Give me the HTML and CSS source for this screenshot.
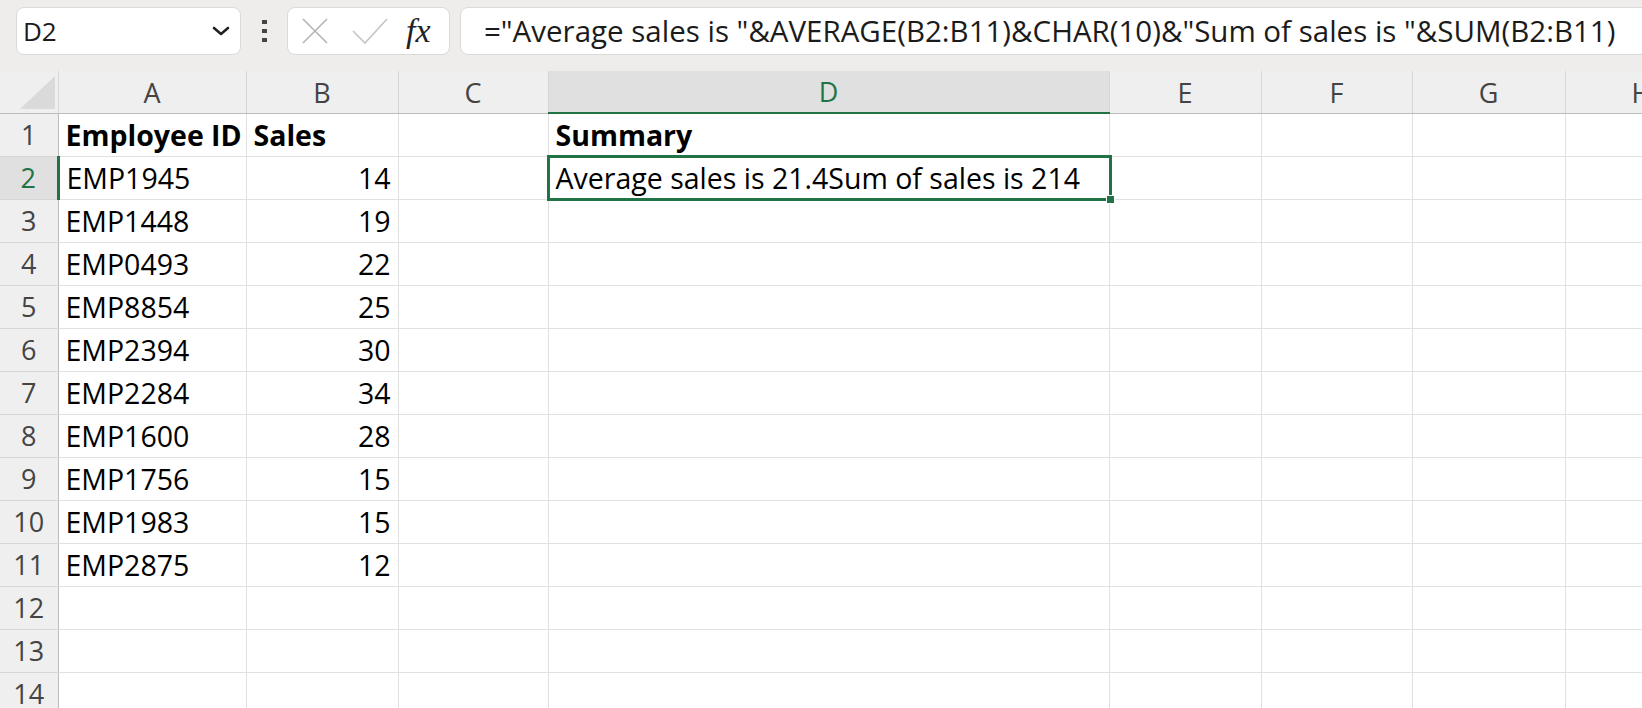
FILE: index.html
```html
<!DOCTYPE html>
<html>
<head>
    <title>Book1 - Excel</title>
    <link rel="stylesheet" href="styles.css">
</head>
<body>
    <div class="formula-bar">
        <div class="name-box">
            <span class="name-text">D2</span>
            <svg class="chevron" viewBox="0 0 18 10" xmlns="http://www.w3.org/2000/svg">
                <path d="M2 2 L9 8 L16 2"/>
            </svg>
        </div>
        <div class="dots"><span></span><span></span><span></span></div>
        <div class="fx-box">
            <svg class="cancel-icon" viewBox="0 0 26 26" xmlns="http://www.w3.org/2000/svg">
                <path d="M1 1 L25 25 M25 1 L1 25"/>
            </svg>
            <svg class="enter-icon" viewBox="0 0 36 26" xmlns="http://www.w3.org/2000/svg">
                <path d="M1 13 L13 25 L35 1"/>
            </svg>
            <span class="fx-label">fx</span>
        </div>
        <div class="formula-input">="Average sales is "&amp;AVERAGE(B2:B11)&amp;CHAR(10)&amp;"Sum of sales is "&amp;SUM(B2:B11)</div>
    </div>

    <table class="sheet">
        <colgroup>
            <col class="col-head">
            <col class="col-a">
            <col class="col-b">
            <col class="col-c">
            <col class="col-d">
            <col class="col-e">
            <col class="col-f">
            <col class="col-g">
            <col class="col-h">
        </colgroup>
        <thead>
            <tr>
                <th class="corner"></th>
                <th>A</th>
                <th>B</th>
                <th>C</th>
                <th class="active">D</th>
                <th>E</th>
                <th>F</th>
                <th>G</th>
                <th>H</th>
            </tr>
        </thead>
        <tbody>
            <tr>
                <th>1</th>
                <td class="bold">Employee ID</td>
                <td class="bold">Sales</td>
                <td></td>
                <td class="bold">Summary</td>
                <td></td><td></td><td></td><td></td>
            </tr>
            <tr>
                <th class="active">2</th>
                <td>EMP1945</td>
                <td class="num">14</td>
                <td></td>
                <td class="selected">Average sales is 21.4Sum of sales is 214<div class="selection"><span class="fill-handle"></span></div></td>
                <td></td><td></td><td></td><td></td>
            </tr>
            <tr>
                <th>3</th>
                <td>EMP1448</td>
                <td class="num">19</td>
                <td></td><td></td><td></td><td></td><td></td><td></td>
            </tr>
            <tr>
                <th>4</th>
                <td>EMP0493</td>
                <td class="num">22</td>
                <td></td><td></td><td></td><td></td><td></td><td></td>
            </tr>
            <tr>
                <th>5</th>
                <td>EMP8854</td>
                <td class="num">25</td>
                <td></td><td></td><td></td><td></td><td></td><td></td>
            </tr>
            <tr>
                <th>6</th>
                <td>EMP2394</td>
                <td class="num">30</td>
                <td></td><td></td><td></td><td></td><td></td><td></td>
            </tr>
            <tr>
                <th>7</th>
                <td>EMP2284</td>
                <td class="num">34</td>
                <td></td><td></td><td></td><td></td><td></td><td></td>
            </tr>
            <tr>
                <th>8</th>
                <td>EMP1600</td>
                <td class="num">28</td>
                <td></td><td></td><td></td><td></td><td></td><td></td>
            </tr>
            <tr>
                <th>9</th>
                <td>EMP1756</td>
                <td class="num">15</td>
                <td></td><td></td><td></td><td></td><td></td><td></td>
            </tr>
            <tr>
                <th>10</th>
                <td>EMP1983</td>
                <td class="num">15</td>
                <td></td><td></td><td></td><td></td><td></td><td></td>
            </tr>
            <tr>
                <th>11</th>
                <td>EMP2875</td>
                <td class="num">12</td>
                <td></td><td></td><td></td><td></td><td></td><td></td>
            </tr>
            <tr>
                <th>12</th>
                <td></td><td></td><td></td><td></td><td></td><td></td><td></td><td></td>
            </tr>
            <tr>
                <th>13</th>
                <td></td><td></td><td></td><td></td><td></td><td></td><td></td><td></td>
            </tr>
            <tr>
                <th>14</th>
                <td></td><td></td><td></td><td></td><td></td><td></td><td></td><td></td>
            </tr>
        </tbody>
    </table>
</body>
</html>
```

FILE: styles.css
```css
body {
    margin: 0;
    padding: 0;
    background: #fff;
    font-family: 'Open Sans', 'Noto Sans', Arial, sans-serif;
    width: 1642px;
    height: 708px;
    overflow: hidden;
}

/* Formula bar */
.formula-bar {
    display: flex;
    align-items: flex-start;
    height: 71px;
    box-sizing: border-box;
    padding: 7px 0 0 16px;
    background: #efedeb;
}
.name-box {
    display: flex;
    align-items: center;
    justify-content: space-between;
    width: 225px;
    height: 48px;
    box-sizing: border-box;
    padding: 0 10px 0 6px;
    background: #fff;
    border: 1px solid #dcdad8;
    border-radius: 8px;
}
.name-text {
    font-size: 26px;
    color: #1b1b1b;
}
.chevron {
    width: 18px;
    height: 10px;
    fill: none;
    stroke: #222;
    stroke-width: 2.6;
    stroke-linecap: round;
    stroke-linejoin: round;
}
.dots {
    display: flex;
    flex-direction: column;
    gap: 5px;
    margin: 13px 20px 0 21px;
}
.dots span {
    width: 5px;
    height: 4px;
    background: #444;
}
.fx-box {
    display: flex;
    align-items: center;
    width: 163px;
    height: 48px;
    box-sizing: border-box;
    padding-left: 14px;
    background: #fff;
    border: 1px solid #dcdad8;
    border-radius: 8px;
}
.cancel-icon {
    width: 26px;
    height: 26px;
    fill: none;
    stroke: #b4b4b4;
    stroke-width: 1.6;
}
.enter-icon {
    width: 36px;
    height: 26px;
    margin-left: 24px;
    fill: none;
    stroke: #c4c4c4;
    stroke-width: 1.6;
}
.fx-label {
    margin-left: 18px;
    font-family: 'Liberation Serif', 'DejaVu Serif', serif;
    font-style: italic;
    font-size: 34px;
    color: #222;
    line-height: 1;
}
.formula-input {
    flex: 1;
    height: 48px;
    box-sizing: border-box;
    margin: 0 -12px 0 10px;
    padding-left: 23px;
    background: #fff;
    border: 1px solid #dcdad8;
    border-radius: 8px;
    font-size: 29.5px;
    line-height: 45px;
    color: #1b1b1b;
    white-space: nowrap;
}

/* Grid */
.sheet {
    border-collapse: collapse;
    table-layout: fixed;
    width: 1718px;
    font-size: 28.5px;
    color: #000;
}
.col-head { width: 58px; }
.col-a { width: 188px; }
.col-b { width: 152px; }
.col-c { width: 150px; }
.col-d { width: 561px; }
.col-e { width: 152px; }
.col-f { width: 151px; }
.col-g { width: 153px; }
.col-h { width: 153px; }

.sheet th {
    background: #efefef;
    color: #444;
    font-weight: normal;
    font-size: 27px;
    text-align: center;
    padding: 0;
}
.sheet thead th {
    height: 41px;
    line-height: 40px;
    vertical-align: bottom;
    border-right: 1px solid #d6d6d6;
    border-bottom: 1px solid #bcbcbc;
}
.sheet tbody th {
    border-right: 1px solid #bcbcbc;
    border-bottom: 1px solid #d6d6d6;
}
.sheet thead th.active {
    background: #e0e0e0;
    color: #217346;
    border-bottom: 2px solid #217346;
}
.sheet tbody th.active {
    background: #e0e0e0;
    color: #217346;
    border-right: 3px solid #217346;
}
.corner {
    position: relative;
}
.corner::after {
    content: "";
    position: absolute;
    right: 3px;
    bottom: 4px;
    border-style: solid;
    border-width: 0 0 33px 35px;
    border-color: transparent transparent #dadada transparent;
}

.sheet td {
    height: 42px;
    padding: 0 7px;
    line-height: 40px;
    vertical-align: middle;
    white-space: nowrap;
    overflow: visible;
    border: 1px solid #e1e1e1;
}
.sheet tbody th {
    height: 42px;
    line-height: 40px;
}
.bold {
    font-weight: bold;
}
.num {
    text-align: right;
}
.selected {
    position: relative;
}
.selection {
    position: absolute;
    left: -2px;
    top: -2px;
    right: -3px;
    bottom: -2px;
    border: 3px solid #217346;
    pointer-events: none;
}
.fill-handle {
    position: absolute;
    right: -6px;
    bottom: -6px;
    width: 7px;
    height: 7px;
    background: #217346;
    border: 1px solid #fff;
}
```
